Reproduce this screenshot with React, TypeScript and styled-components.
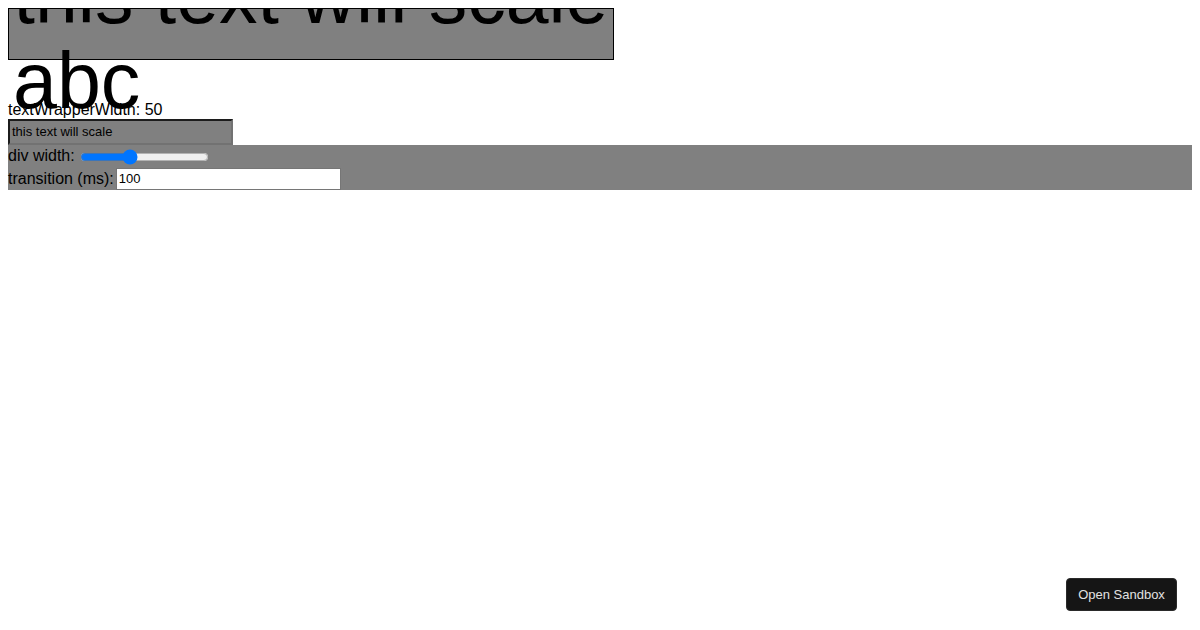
import React from "react";
import styled, { createGlobalStyle } from "styled-components";

const Global = createGlobalStyle`
  html, body { background: #ffffff; }
  body {
    margin: 8px;
    font-family: "Liberation Sans", Arial, sans-serif;
    font-size: 16px;
    color: #000;
  }
`;

const ScaleBox = styled.div`
  width: 604px;
  height: 50px;
  border: 1px solid #000;
  background: #808080;
  text-align: center;
`;

const BigText = styled.div<{ $shift?: number }>`
  font-size: 77px;
  line-height: 0;
  height: 0;
  margin-top: ${(p) => p.$shift ?? 0}px;
  white-space: nowrap;
  position: relative;
`;

const AbcLine = styled.div`
  height: 41px;
  font-size: 79px;
  line-height: 41px;
  padding-left: 5px;
  white-space: nowrap;
  position: relative;
  z-index: 1;
`;

const Label = styled.div`
  font-size: 16px;
  line-height: 18px;
  height: 18px;
`;

const SmallBox = styled.div`
  box-sizing: border-box;
  width: 225px;
  height: 26px;
  background: #808080;
  border-top: 2px solid #1c1c1c;
  border-left: 2px solid #1c1c1c;
  border-right: 2px solid #727272;
  border-bottom: 2px solid #727272;
  padding: 3px 2px 0;
  font-size: 13px;
  line-height: 16px;
  white-space: nowrap;
`;

const Controls = styled.div`
  background: #808080;
  display: flex;
  flex-direction: column;
`;

const Row = styled.label<{ $h: number }>`
  display: flex;
  align-items: center;
  font-size: 16px;
  height: ${(p) => p.$h}px;
  gap: 2px;
`;

const Range = styled.input`
  width: 129px;
  margin: 2px 2px 0 3px;
  accent-color: #0075ff;
`;

const TextInput = styled.input`
  box-sizing: border-box;
  width: 225px;
  height: 22px;
  margin: 0;
  border: 1px solid #767676;
  background: #fff;
  padding: 1px 2px;
  font-family: "Liberation Sans", Arial, sans-serif;
  font-size: 13px;
  color: #000;
  outline: none;
`;

const SandboxButton = styled.button`
  position: fixed;
  right: 23px;
  bottom: 19px;
  width: 111px;
  height: 33px;
  border-radius: 4px;
  border: 1px solid #2a2a2a;
  background: #151515;
  color: #e2e2e2;
  font-family: "Liberation Sans", Arial, sans-serif;
  font-size: 13px;
  padding: 0;
  cursor: pointer;
`;

export default function App() {
  return (
    <>
      <Global />
      <ScaleBox>
        <BigText $shift={-13}>this text will scale</BigText>
      </ScaleBox>
      <AbcLine>abc</AbcLine>
      <Label>textWrapperWidth: 50</Label>
      <SmallBox>this text will scale</SmallBox>
      <Controls>
        <Row $h={22}>
          div width:
          <Range type="range" min={0} max={100} defaultValue={37} />
        </Row>
        <Row $h={23}>
          transition (ms):
          <TextInput type="text" defaultValue="100" />
        </Row>
      </Controls>
      <SandboxButton>Open Sandbox</SandboxButton>
    </>
  );
}
